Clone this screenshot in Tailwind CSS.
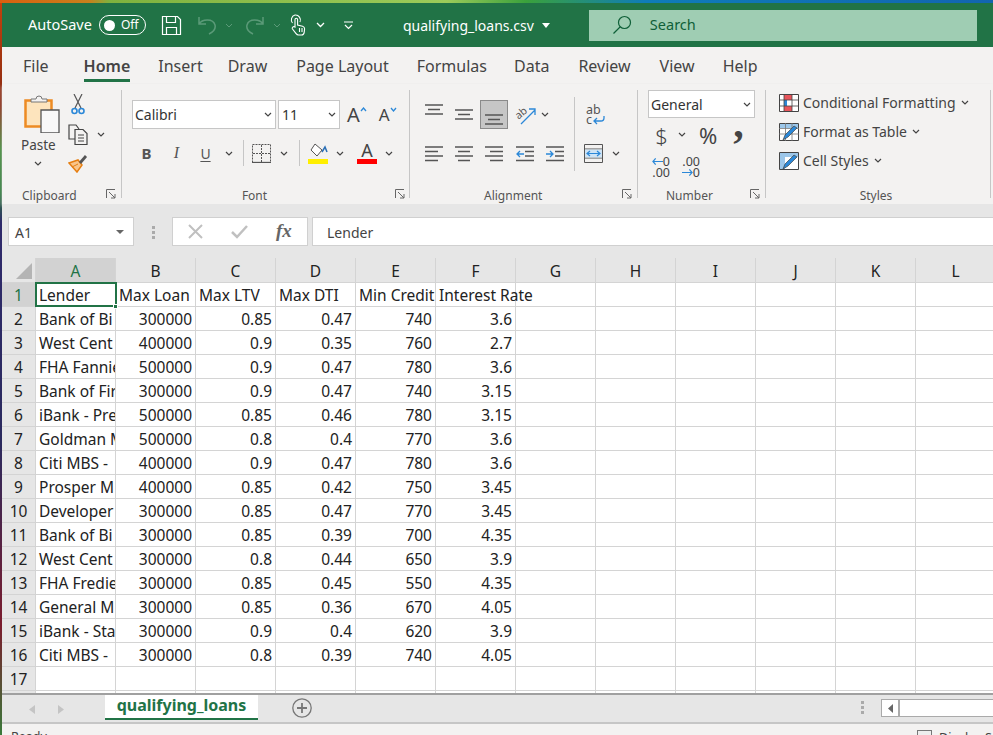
<!DOCTYPE html>
<html lang="en">
<head>
<meta charset="utf-8">
<title>qualifying_loans.csv</title>
<script src="https://cdn.jsdelivr.net/npm/@tailwindcss/browser@4"></script>
</head>
<body class="m-0 overflow-hidden bg-white">
<div class="flex h-[735px] w-[993px] flex-col overflow-hidden font-['Noto_Sans',sans-serif] text-[#444]">
  <div class="h-[3px] shrink-0 bg-[linear-gradient(90deg,#d9600f_0,#c9801c_9%,#7fb23e_11%,#9ccb5a_45%,#3aa13c_53%,#0f7cb8_65%,#1265b0_100%)]"></div>
  <div class="flex min-h-0 flex-1">
    <div class="w-[2px] shrink-0 bg-[linear-gradient(180deg,#c2410c_0,#8a2a12_14%,#3f8a36_20%,#2c7a3a_26%,#2f2a6b_30%,#2b2a5e_60%,#7b1d2e_85%,#3a7a3a_100%)]"></div>
    <div class="flex min-w-0 flex-1 flex-col">

      <!-- Title bar -->
      <div class="flex h-[44px] shrink-0 items-center bg-[#217346] text-white">
        <span class="ml-[26px] text-[14.5px]">AutoSave</span>
        <div class="ml-[7px] flex h-[20px] w-[47px] items-center rounded-full border border-white pl-[4px]">
          <span class="h-[11px] w-[11px] rounded-full bg-white"></span>
          <span class="ml-[6px] text-[12px]">Off</span>
        </div>
        <svg class="ml-[15px]" width="21" height="21" viewBox="0 0 21 21" fill="none" stroke="#fff" stroke-width="1.2"><path d="M1.500 1.500h15l3 3v15h-18z"/><path d="M5.500 1.500v6h9v-6M5.500 19.500v-7h10v7"/></svg>
        <svg class="ml-[15px]" width="20" height="20" viewBox="0 0 20 20" fill="none" stroke="#5b9a78" stroke-width="1.5"><path d="M2 2v7h7M2 9c3-5 14-6 16 1 1 4-2 7-6 9"/></svg>
        <svg class="ml-[8px]" width="8" height="5" viewBox="0 0 8 5" fill="none" stroke="#5b9a78"><path d="M1 1l3 3 3-3"/></svg>
        <svg class="ml-[12px]" width="20" height="20" viewBox="0 0 20 20" fill="none" stroke="#5b9a78" stroke-width="1.5"><path d="M18 2v7h-7M18 9C15 4 4 3 2 10c-1 4 2 7 6 9"/></svg>
        <svg class="ml-[8px]" width="8" height="5" viewBox="0 0 8 5" fill="none" stroke="#5b9a78"><path d="M1 1l3 3 3-3"/></svg>
        <svg class="ml-[9px]" width="16" height="22" viewBox="0 0 16 22" fill="none" stroke="#fff" stroke-width="1.1"><path d="M2.500 9A5 5 0 0 1 5 1a5 5 0 0 1 5 7"/><path d="M5 13V5.500a1.300 1.300 0 0 1 2.600 0V11l5 1.200c1.600.5 2 1.300 2 2.600l-.4 3.600c-.2 1.600-1 2.600-2.600 2.600H8.500c-1 0-1.800-.5-2.400-1.300L2.500 15c-1-1.500.8-3 2.500-2z"/><path d="M9.500 14v4M12 14v4"/></svg>
        <svg class="ml-[10px]" width="9" height="6" viewBox="0 0 9 6" fill="none" stroke="#fff" stroke-width="1.3"><path d="M1 1l3.500 3.500L8 1"/></svg>
        <svg class="ml-[18px]" width="11" height="9" viewBox="0 0 11 9" fill="none" stroke="#fff"><path d="M1 1h9M2 4l3.500 3.500L9 4" stroke-width="1.2"/></svg>
        <span class="ml-[49px] text-[14px]">qualifying_loans.csv</span>
        <svg class="ml-[8px]" width="8" height="5" viewBox="0 0 8 5" fill="#fff"><path d="M0 0h8L4 5z"/></svg>
        <div class="ml-[39px] flex h-[31px] w-[388px] items-center bg-[#9fcdb3] text-[#0f5f38]">
          <svg class="ml-[23px]" width="20" height="20" viewBox="0 0 20 20" fill="none" stroke="#0f5f38" stroke-width="1.2"><circle cx="12.500" cy="7.500" r="6"/><path d="M8.300 11.800L1.500 18.500"/></svg>
          <span class="ml-[18px] text-[14.500px]">Search</span>
        </div>
      </div>

      <!-- Ribbon tabs -->
      <div class="flex h-[37px] shrink-0 items-start bg-[#f3f2f1] pt-[8px] text-[16px] leading-[22px]">
        <span class="ml-[21px]">File</span>
        <span class="ml-[35px] border-b-[3px] border-[#217346] pb-[2px] font-semibold">Home</span>
        <span class="ml-[28px]">Insert</span>
        <span class="ml-[25px]">Draw</span>
        <span class="ml-[29px]">Page Layout</span>
        <span class="ml-[28px]">Formulas</span>
        <span class="ml-[27px]">Data</span>
        <span class="ml-[29px]">Review</span>
        <span class="ml-[29px]">View</span>
        <span class="ml-[28px]">Help</span>
      </div>

      <!-- Ribbon -->
      <div class="flex h-[120px] shrink-0 items-start bg-[#f3f2f1] pt-[6px] shadow-[0_2px_3px_#c8c8c8]">

        <!-- Clipboard -->
        <div class="relative flex h-[108px] w-[120px] shrink-0 flex-col border-r border-[#c6c6c6]">
          <div class="flex h-[100px] shrink-0">
            <div class="ml-[19px] flex w-[40px] flex-col items-start pt-[5px]">
              <svg class="ml-[3px]" width="36" height="38" viewBox="0 0 36 38" fill="none"><path d="M1.500 5.500h26v26h-26z" fill="#fde4bd" stroke="#ed8b23" stroke-width="2.500"/><path d="M7 7V4h5a3 3 0 0 1 6 0h5v3z" fill="#f3f2f1" stroke="#777"/><path d="M17 15h18v23H17z" fill="#f8f8f8" stroke="#555" stroke-width="1.300"/></svg>
              <span class="mt-[3px] text-[13.500px] leading-[18px]">Paste</span>
              <svg class="mt-[7px] ml-[13px]" width="8" height="5" viewBox="0 0 8 5" fill="none" stroke="#444" stroke-width="1.200"><path d="M1 1l3 3 3-3"/></svg>
            </div>
            <div class="ml-[7px] flex flex-col pt-[4px]">
              <svg class="ml-[3px]" width="14" height="21" viewBox="0 0 14 21" fill="none"><path d="M3 0l7 14M11 0L4 14" stroke="#555" stroke-width="1.200"/><circle cx="3.500" cy="17" r="2.500" stroke="#2b88d8" stroke-width="1.600"/><circle cx="10.500" cy="17" r="2.500" stroke="#2b88d8" stroke-width="1.600"/></svg>
              <div class="mt-[9px] flex items-center">
                <svg width="20" height="21" viewBox="0 0 20 21" fill="none" stroke="#444" stroke-width="1.200"><path d="M8 15H1V1h7l3 4"/><path d="M7 5.500h8l4 4v11H7z" fill="#f3f2f1"/><path d="M10 11h6M10 14h6M10 17h6" stroke-width="1"/></svg>
                <svg class="ml-[9px]" width="8" height="5" viewBox="0 0 8 5" fill="none" stroke="#444" stroke-width="1.200"><path d="M1 1l3 3 3-3"/></svg>
              </div>
              <svg class="mt-[9px]" width="20" height="19" viewBox="0 0 20 19" fill="none"><path d="M1 9l9-3 4 5-5 7z" fill="#f8c58a" stroke="#e67e10" stroke-width="1.500"/><path d="M12 9l6-7" stroke="#555" stroke-width="2.800"/><path d="M4 13l6-3" stroke="#e67e10"/></svg>
            </div>
          </div>
          <span class="pl-[20px] text-[12px] leading-[12px] text-[#555]">Clipboard</span>
          <svg class="absolute right-[5px] bottom-[-1px]" width="10" height="10" viewBox="0 0 10 10" fill="none" stroke="#666"><path d="M.500 9V.500H9M3 3l6 6M9 5v4H5"/></svg>
        </div>

        <!-- Font -->
        <div class="relative flex h-[108px] w-[288px] shrink-0 flex-col items-stretch border-r border-[#c6c6c6]">
          <div class="flex h-[100px] shrink-0 flex-col pt-[10px]">
            <div class="flex items-center">
              <div class="ml-[10px] flex h-[29px] w-[144px] items-center justify-between border border-[#c6c6c6] bg-white pr-[3px] pl-[2px] text-[14px] text-[#333]">
                <span>Calibri</span>
                <svg width="8" height="5" viewBox="0 0 8 5" fill="none" stroke="#444" stroke-width="1.200"><path d="M1 1l3 3 3-3"/></svg>
              </div>
              <div class="ml-[2px] flex h-[29px] w-[62px] items-center justify-between border border-[#c6c6c6] bg-white pr-[3px] pl-[3px] text-[14px] text-[#333]">
                <span>11</span>
                <svg width="8" height="5" viewBox="0 0 8 5" fill="none" stroke="#444" stroke-width="1.200"><path d="M1 1l3 3 3-3"/></svg>
              </div>
              <span class="ml-[7px] text-[20px] leading-none">A</span>
              <svg class="mb-[10px]" width="7" height="5" viewBox="0 0 7 5" fill="none" stroke="#2b88d8" stroke-width="1.300"><path d="M1 4l2.500-3L6 4"/></svg>
              <span class="ml-[12px] text-[17px] leading-none">A</span>
              <svg class="mb-[10px]" width="7" height="5" viewBox="0 0 7 5" fill="none" stroke="#2b88d8" stroke-width="1.300"><path d="M1 1l2.500 3L6 1"/></svg>
            </div>
            <div class="mt-[11px] flex h-[26px] items-center">
              <span class="ml-[19px] w-[11px] text-center text-[15px] font-bold text-[#555]">B</span>
              <span class="ml-[19px] w-[11px] text-center font-['Liberation_Serif'] text-[16px] text-[#555] italic">I</span>
              <span class="ml-[18px] w-[11px] text-center text-[14px] text-[#555] underline underline-offset-2">U</span>
              <svg class="ml-[14px]" width="8" height="5" viewBox="0 0 8 5" fill="none" stroke="#444" stroke-width="1.200"><path d="M1 1l3 3 3-3"/></svg>
              <span class="ml-[10px] h-[26px] w-px bg-[#c6c6c6]"></span>
              <svg class="ml-[8px]" width="19" height="19" viewBox="0 0 19 19" fill="none" stroke="#555"><path d="M.500.500h18v18H.500z" stroke-dasharray="2 1"/><path d="M9.500 1v17M1 9.500h17" stroke-dasharray="2 1"/><path d="M0 18.500h19" stroke-width="1.300"/></svg>
              <svg class="ml-[9px]" width="8" height="5" viewBox="0 0 8 5" fill="none" stroke="#444" stroke-width="1.200"><path d="M1 1l3 3 3-3"/></svg>
              <span class="ml-[11px] h-[26px] w-px bg-[#c6c6c6]"></span>
              <svg class="ml-[8px]" width="20" height="21" viewBox="0 0 20 21" fill="none"><path d="M7 1l7 6-5 6-6-6z" fill="#fff" stroke="#555"/><path d="M14 9l3-5 2 5" stroke="#2b6fb5" stroke-width="1.500"/><path d="M0 16h20v5H0z" fill="#ffef00" stroke="none"/></svg>
              <svg class="ml-[8px]" width="8" height="5" viewBox="0 0 8 5" fill="none" stroke="#444" stroke-width="1.200"><path d="M1 1l3 3 3-3"/></svg>
              <div class="ml-[13px] flex w-[20px] flex-col items-center">
                <span class="text-[18px] leading-[16px]">A</span>
                <span class="mt-[1px] h-[5px] w-[20px] bg-[#f00]"></span>
              </div>
              <svg class="ml-[8px]" width="8" height="5" viewBox="0 0 8 5" fill="none" stroke="#444" stroke-width="1.200"><path d="M1 1l3 3 3-3"/></svg>
            </div>
          </div>
          <span class="pr-[22px] text-center text-[12px] leading-[12px] text-[#555]">Font</span>
          <svg class="absolute right-[4px] bottom-[-1px]" width="10" height="10" viewBox="0 0 10 10" fill="none" stroke="#666"><path d="M.500 9V.500H9M3 3l6 6M9 5v4H5"/></svg>
        </div>

        <!-- Alignment -->
        <div class="relative flex h-[108px] w-[228px] shrink-0 flex-col border-r border-[#c6c6c6]">
          <div class="flex h-[100px] shrink-0 pt-[10px]">
            <div class="flex flex-col">
              <div class="flex h-[29px] items-center">
                <svg class="mb-[9px] ml-[15px]" width="18" height="12" viewBox="0 0 18 12" stroke="#555" stroke-width="1.300"><path d="M0 1h18M3 5.500h12M0 10h18"/></svg>
                <svg class="ml-[12px]" width="18" height="12" viewBox="0 0 18 12" stroke="#555" stroke-width="1.300"><path d="M0 1h18M3 5.500h12M0 10h18"/></svg>
                <div class="ml-[7px] flex h-[29px] w-[28px] items-end justify-center border border-[#8a8a8a] bg-[#c6c6c6] pb-[2px]">
                  <svg width="18" height="12" viewBox="0 0 18 12" stroke="#555" stroke-width="1.300"><path d="M0 1h18M3 5.500h12M0 10h18"/></svg>
                </div>
                <svg class="ml-[7px] overflow-visible" width="21" height="20" viewBox="0 0 21 20" fill="none"><text x="1" y="12" transform="rotate(-40 6 10)" font-family="Noto Sans" font-size="10.500" fill="#555">ab</text><path d="M6 19L20 5M14 4h6v6" stroke="#2b88d8" stroke-width="1.300"/></svg>
                <svg class="ml-[5px]" width="8" height="5" viewBox="0 0 8 5" fill="none" stroke="#444" stroke-width="1.200"><path d="M1 1l3 3 3-3"/></svg>
              </div>
              <div class="mt-[16px] flex h-[17px] items-center">
                <svg class="ml-[15px]" width="18" height="16" viewBox="0 0 18 16" stroke="#555" stroke-width="1.300"><path d="M0 1h18M0 5.500h13M0 10h18M0 14.500h13"/></svg>
                <svg class="ml-[12px]" width="18" height="16" viewBox="0 0 18 16" stroke="#555" stroke-width="1.300"><path d="M0 1h18M3 5.500h12M0 10h18M3 14.500h12"/></svg>
                <svg class="ml-[12px]" width="18" height="16" viewBox="0 0 18 16" stroke="#555" stroke-width="1.300"><path d="M0 1h18M5 5.500h13M0 10h18M5 14.500h13"/></svg>
                <svg class="ml-[13px]" width="18" height="16" viewBox="0 0 18 16" fill="none" stroke="#555" stroke-width="1.300"><path d="M0 1h18M9 5.500h9M9 10h9M0 14.500h18"/><path d="M8 8H1M4 5L1 8l3 3" stroke="#2b88d8"/></svg>
                <svg class="ml-[12px]" width="18" height="16" viewBox="0 0 18 16" fill="none" stroke="#555" stroke-width="1.300"><path d="M0 1h18M9 5.500h9M9 10h9M0 14.500h18"/><path d="M0 8h7M4 5l3 3-3 3" stroke="#2b88d8"/></svg>
              </div>
            </div>
            <span class="-mt-[3px] ml-[10px] h-[74px] w-px bg-[#c6c6c6]"></span>
            <div class="ml-[9px] flex flex-col">
              <div class="ml-[2px] flex h-[29px] flex-col items-start text-[12.500px] leading-[10px] text-[#555]">
                <span class="mt-[5px]">ab</span>
                <span class="flex items-center">c<svg class="ml-[1px]" width="12" height="9" viewBox="0 0 12 9" fill="none" stroke="#2b88d8" stroke-width="1.300"><path d="M11 0v2a3 3 0 0 1-3 3H1M4 2L1 5l3 3"/></svg></span>
              </div>
              <div class="mt-[14px] flex h-[20px] items-center">
                <svg width="19" height="19" viewBox="0 0 19 19" fill="none"><path d="M.500.500h18v18H.500z" stroke="#555"/><path d="M0 5h19M0 14h19" stroke="#555"/><path d="M1 5.500h17v8H1z" fill="#cfe4f5"/><path d="M3 9.500h13M6 7L3 9.500 6 12M13 7l3 2.500-3 2.500" stroke="#2b88d8" stroke-width="1.200"/></svg>
                <svg class="ml-[9px]" width="8" height="5" viewBox="0 0 8 5" fill="none" stroke="#444" stroke-width="1.200"><path d="M1 1l3 3 3-3"/></svg>
              </div>
            </div>
          </div>
          <span class="pl-[74px] text-[12px] leading-[12px] text-[#555]">Alignment</span>
          <svg class="absolute right-[5px] bottom-[-1px]" width="10" height="10" viewBox="0 0 10 10" fill="none" stroke="#666"><path d="M.500 9V.500H9M3 3l6 6M9 5v4H5"/></svg>
        </div>

        <!-- Number -->
        <div class="relative flex h-[108px] w-[128px] shrink-0 flex-col border-r border-[#c6c6c6]">
          <div class="flex h-[100px] shrink-0 flex-col">
            <div class="ml-[10px] flex h-[28px] w-[107px] items-center justify-between border border-[#c6c6c6] bg-white pr-[3px] pl-[2px] text-[14px] text-[#333]">
              <span>General</span>
              <svg width="8" height="5" viewBox="0 0 8 5" fill="none" stroke="#444" stroke-width="1.200"><path d="M1 1l3 3 3-3"/></svg>
            </div>
            <div class="mt-[3px] flex h-[27px] items-center">
              <span class="ml-[17px] w-[13px] text-center text-[22px] leading-none font-light">$</span>
              <svg class="ml-[10px]" width="8" height="5" viewBox="0 0 8 5" fill="none" stroke="#444" stroke-width="1.200"><path d="M1 1l3 3 3-3"/></svg>
              <span class="ml-[13px] text-[22px] leading-none">%</span>
              <span class="mb-[23px] ml-[16px] font-['Liberation_Serif'] text-[42px] leading-[20px] font-bold">,</span>
            </div>
            <div class="mt-[8px] flex items-center">
              <div class="ml-[12px] flex h-[22px] w-[20px] flex-col items-end text-[12.500px] leading-[11px]">
                <span class="flex items-center"><svg width="11" height="9" viewBox="0 0 12 9" fill="none" stroke="#2b88d8" stroke-width="1.300"><path d="M12 4.500H1M4 1L1 4.500 4 8"/></svg>0</span>
                <span>.00</span>
              </div>
              <div class="ml-[10px] flex h-[22px] w-[20px] flex-col items-end text-[12.500px] leading-[11px]">
                <span>.00</span>
                <span class="flex items-center"><svg width="11" height="9" viewBox="0 0 12 9" fill="none" stroke="#2b88d8" stroke-width="1.300"><path d="M0 4.500h11M8 1l3 3.500L8 8"/></svg>0</span>
              </div>
            </div>
          </div>
          <span class="pl-[28px] text-[12px] leading-[12px] text-[#555]">Number</span>
          <svg class="absolute right-[5px] bottom-[-1px]" width="10" height="10" viewBox="0 0 10 10" fill="none" stroke="#666"><path d="M.500 9V.500H9M3 3l6 6M9 5v4H5"/></svg>
        </div>

        <!-- Styles -->
        <div class="flex h-[108px] w-[225px] shrink-0 flex-col border-r border-[#c6c6c6]">
          <div class="flex h-[100px] shrink-0 flex-col pl-[13px] text-[14px] leading-[19px]">
            <div class="-mt-[2px] flex h-[29px] items-center">
              <svg width="20" height="18" viewBox="0 0 20 18" fill="none"><path d="M.500.500h19v17H.500z" fill="#fff" stroke="#444"/><path d="M5 1h8v5H5zM5 12h8v5H5z" fill="#e8555b"/><path d="M5 6h3v6H5z" fill="#2b88d8"/><path d="M0 6h20M0 12h20M5 0v18M13 0v18" stroke="#444" stroke-width=".8"/></svg>
              <span class="ml-[4px]">Conditional Formatting</span>
              <svg class="ml-[5px]" width="8" height="5" viewBox="0 0 8 5" fill="none" stroke="#444" stroke-width="1.200"><path d="M1 1l3 3 3-3"/></svg>
            </div>
            <div class="flex h-[29px] items-center">
              <svg width="20" height="18" viewBox="0 0 20 18" fill="none"><path d="M.500.500h19v17H.500z" fill="#fff" stroke="#444"/><path d="M1 1h18v4H1z" fill="#9cc7ea"/><path d="M0 5.500h20M0 11h20M6.500 0v18M13 0v18" stroke="#777" stroke-width=".8"/><path d="M4 17l2-5 9-9 3 2-9 9z" fill="#2b88d8" stroke="#444" stroke-width=".7"/></svg>
              <span class="ml-[4px]">Format as Table</span>
              <svg class="ml-[5px]" width="8" height="5" viewBox="0 0 8 5" fill="none" stroke="#444" stroke-width="1.200"><path d="M1 1l3 3 3-3"/></svg>
            </div>
            <div class="flex h-[29px] items-center">
              <svg width="20" height="18" viewBox="0 0 20 18" fill="none"><path d="M.500.500h19v17H.500z" fill="#fff" stroke="#444"/><path d="M1 1h18v4H1zM1 5h5v12H1z" fill="#9cc7ea"/><path d="M4 17l2-5 9-9 3 2-9 9z" fill="#2b88d8" stroke="#444" stroke-width=".7"/></svg>
              <span class="ml-[4px]">Cell Styles</span>
              <svg class="ml-[5px]" width="8" height="5" viewBox="0 0 8 5" fill="none" stroke="#444" stroke-width="1.200"><path d="M1 1l3 3 3-3"/></svg>
            </div>
          </div>
          <span class="pr-[4px] text-center text-[12px] leading-[12px] text-[#555]">Styles</span>
        </div>
      </div>

      <!-- Formula bar -->
      <div class="flex h-[54px] shrink-0 items-start bg-[#e6e6e6] pt-[13px] text-[14px] text-[#444]">
        <div class="ml-[6px] flex h-[29px] w-[126px] items-center justify-between border border-[#d0d0d0] bg-white pt-[1px] pr-[9px] pl-[6px]">
          <span>A1</span>
          <svg width="8" height="4" viewBox="0 0 8 4" fill="#666"><path d="M0 0h8L4 4z"/></svg>
        </div>
        <div class="mt-[9px] mr-[17px] ml-[18px] flex flex-col gap-[2px]">
          <span class="h-[3px] w-[3px] bg-[#aaa]"></span>
          <span class="h-[3px] w-[3px] bg-[#aaa]"></span>
          <span class="h-[3px] w-[3px] bg-[#aaa]"></span>
        </div>
        <div class="flex h-[29px] w-[136px] items-center border border-[#d0d0d0] bg-white">
          <svg class="ml-[15px]" width="15" height="15" viewBox="0 0 15 15" stroke="#c0c0c0" stroke-width="2"><path d="M1 1l13 13M14 1L1 14"/></svg>
          <svg class="ml-[28px]" width="17" height="14" viewBox="0 0 17 14" fill="none" stroke="#c0c0c0" stroke-width="2.500"><path d="M1 7l5 5L16 1"/></svg>
          <span class="ml-[28px] font-['Liberation_Serif'] text-[19px] font-bold text-[#666] italic">fx</span>
        </div>
        <div class="ml-[4px] flex h-[29px] min-w-0 flex-1 items-center border border-r-0 border-[#d0d0d0] bg-white pt-[1px] pl-[14px]">Lender</div>
      </div>

      <!-- Sheet -->
      <div class="relative h-[435px] shrink-0 overflow-hidden bg-white text-[15.500px] leading-[24px] text-[#222]">
        <div class="grid grid-cols-[34px_repeat(12,80px)] grid-rows-[25px_repeat(18,24px)] [&>div]:overflow-hidden [&>div]:border-r [&>div]:border-b [&>div]:border-[#d4d4d4] [&>div]:px-[3px] [&>div]:whitespace-nowrap">
          <div class="flex items-end justify-end border-[#b8b8b8] bg-[#e6e6e6] pb-[3px]"><svg width="16" height="16" viewBox="0 0 16 16" fill="#b4b4b4"><path d="M16 0v16H0z"/></svg></div>
          <div class="bg-[#d2d2d2] text-center leading-[26px] text-[#217346]">A</div>
          <div class="bg-[#e6e6e6] text-center leading-[26px]">B</div>
          <div class="bg-[#e6e6e6] text-center leading-[26px]">C</div>
          <div class="bg-[#e6e6e6] text-center leading-[26px]">D</div>
          <div class="bg-[#e6e6e6] text-center leading-[26px]">E</div>
          <div class="bg-[#e6e6e6] text-center leading-[26px]">F</div>
          <div class="bg-[#e6e6e6] text-center leading-[26px]">G</div>
          <div class="bg-[#e6e6e6] text-center leading-[26px]">H</div>
          <div class="bg-[#e6e6e6] text-center leading-[26px]">I</div>
          <div class="bg-[#e6e6e6] text-center leading-[26px]">J</div>
          <div class="bg-[#e6e6e6] text-center leading-[26px]">K</div>
          <div class="bg-[#e6e6e6] text-center leading-[26px]">L</div>

          <div class="bg-[#d2d2d2] text-center text-[#217346]">1</div><div>Lender</div><div>Max Loan</div><div>Max LTV</div><div>Max DTI</div><div>Min Credit</div><div class="overflow-visible!">Interest Rate</div><div></div><div></div><div></div><div></div><div></div><div></div>
          <div class="bg-[#e6e6e6] text-center">2</div><div>Bank of Bi</div><div class="text-right">300000</div><div class="text-right">0.85</div><div class="text-right">0.47</div><div class="text-right">740</div><div class="text-right">3.6</div><div></div><div></div><div></div><div></div><div></div><div></div>
          <div class="bg-[#e6e6e6] text-center">3</div><div>West Cent</div><div class="text-right">400000</div><div class="text-right">0.9</div><div class="text-right">0.35</div><div class="text-right">760</div><div class="text-right">2.7</div><div></div><div></div><div></div><div></div><div></div><div></div>
          <div class="bg-[#e6e6e6] text-center">4</div><div>FHA Fannie</div><div class="text-right">500000</div><div class="text-right">0.9</div><div class="text-right">0.47</div><div class="text-right">780</div><div class="text-right">3.6</div><div></div><div></div><div></div><div></div><div></div><div></div>
          <div class="bg-[#e6e6e6] text-center">5</div><div>Bank of Fir</div><div class="text-right">300000</div><div class="text-right">0.9</div><div class="text-right">0.47</div><div class="text-right">740</div><div class="text-right">3.15</div><div></div><div></div><div></div><div></div><div></div><div></div>
          <div class="bg-[#e6e6e6] text-center">6</div><div>iBank - Pre</div><div class="text-right">500000</div><div class="text-right">0.85</div><div class="text-right">0.46</div><div class="text-right">780</div><div class="text-right">3.15</div><div></div><div></div><div></div><div></div><div></div><div></div>
          <div class="bg-[#e6e6e6] text-center">7</div><div>Goldman M</div><div class="text-right">500000</div><div class="text-right">0.8</div><div class="text-right">0.4</div><div class="text-right">770</div><div class="text-right">3.6</div><div></div><div></div><div></div><div></div><div></div><div></div>
          <div class="bg-[#e6e6e6] text-center">8</div><div>Citi MBS -</div><div class="text-right">400000</div><div class="text-right">0.9</div><div class="text-right">0.47</div><div class="text-right">780</div><div class="text-right">3.6</div><div></div><div></div><div></div><div></div><div></div><div></div>
          <div class="bg-[#e6e6e6] text-center">9</div><div>Prosper M</div><div class="text-right">400000</div><div class="text-right">0.85</div><div class="text-right">0.42</div><div class="text-right">750</div><div class="text-right">3.45</div><div></div><div></div><div></div><div></div><div></div><div></div>
          <div class="bg-[#e6e6e6] text-center">10</div><div>Developer</div><div class="text-right">300000</div><div class="text-right">0.85</div><div class="text-right">0.47</div><div class="text-right">770</div><div class="text-right">3.45</div><div></div><div></div><div></div><div></div><div></div><div></div>
          <div class="bg-[#e6e6e6] text-center">11</div><div>Bank of Bi</div><div class="text-right">300000</div><div class="text-right">0.85</div><div class="text-right">0.39</div><div class="text-right">700</div><div class="text-right">4.35</div><div></div><div></div><div></div><div></div><div></div><div></div>
          <div class="bg-[#e6e6e6] text-center">12</div><div>West Cent</div><div class="text-right">300000</div><div class="text-right">0.8</div><div class="text-right">0.44</div><div class="text-right">650</div><div class="text-right">3.9</div><div></div><div></div><div></div><div></div><div></div><div></div>
          <div class="bg-[#e6e6e6] text-center">13</div><div>FHA Fredie</div><div class="text-right">300000</div><div class="text-right">0.85</div><div class="text-right">0.45</div><div class="text-right">550</div><div class="text-right">4.35</div><div></div><div></div><div></div><div></div><div></div><div></div>
          <div class="bg-[#e6e6e6] text-center">14</div><div>General M</div><div class="text-right">300000</div><div class="text-right">0.85</div><div class="text-right">0.36</div><div class="text-right">670</div><div class="text-right">4.05</div><div></div><div></div><div></div><div></div><div></div><div></div>
          <div class="bg-[#e6e6e6] text-center">15</div><div>iBank - Sta</div><div class="text-right">300000</div><div class="text-right">0.9</div><div class="text-right">0.4</div><div class="text-right">620</div><div class="text-right">3.9</div><div></div><div></div><div></div><div></div><div></div><div></div>
          <div class="bg-[#e6e6e6] text-center">16</div><div>Citi MBS -</div><div class="text-right">300000</div><div class="text-right">0.8</div><div class="text-right">0.39</div><div class="text-right">740</div><div class="text-right">4.05</div><div></div><div></div><div></div><div></div><div></div><div></div>
          <div class="bg-[#e6e6e6] text-center">17</div><div></div><div></div><div></div><div></div><div></div><div></div><div></div><div></div><div></div><div></div><div></div><div></div>
          <div class="bg-[#e6e6e6]"></div><div></div><div></div><div></div><div></div><div></div><div></div><div></div><div></div><div></div><div></div><div></div><div></div>
        </div>
        <!-- Selected cell -->
        <div class="absolute top-[24px] left-[33px] h-[25px] w-[82px] border-2 border-[#217346]"></div>
        <div class="absolute top-[46px] left-[111px] h-[5px] w-[5px] border border-white bg-[#217346]"></div>
      </div>

      <!-- Sheet tabs -->
      <div class="flex h-[31px] shrink-0 items-start border-t-2 border-b-2 border-t-[#a0a0a0] border-b-[#c6c6c6] bg-[#e6e6e6]">
        <svg class="mt-[10px] ml-[27px]" width="6" height="9" viewBox="0 0 6 9" fill="#c4c4c4"><path d="M6 0v9L0 4.500z"/></svg>
        <svg class="mt-[10px] ml-[23px]" width="6" height="9" viewBox="0 0 6 9" fill="#c4c4c4"><path d="M0 0v9l6-4.500z"/></svg>
        <div class="ml-[41px] flex h-[25px] w-[153px] items-center justify-center border-b-2 border-[#217346] bg-white pb-[3px] text-[16px] font-bold text-[#217346]">qualifying_loans</div>
        <svg class="mt-[3px] ml-[34px]" width="20" height="20" viewBox="0 0 20 20" fill="none" stroke="#777" stroke-width="1.300"><circle cx="10" cy="10" r="9.200"/><path d="M5 10h10M10 5v10" stroke-width="1.800"/></svg>
        <div class="mt-[6px] ml-[549px] flex flex-col gap-[2px]">
          <span class="h-[3px] w-[3px] bg-[#aaa]"></span>
          <span class="h-[3px] w-[3px] bg-[#aaa]"></span>
          <span class="h-[3px] w-[3px] bg-[#aaa]"></span>
        </div>
        <div class="mt-[4px] ml-[17px] flex h-[18px] flex-1 border-y border-l border-[#aaa] bg-white">
          <div class="flex w-[18px] items-center justify-center border-r-2 border-[#aaa]">
            <svg width="5" height="9" viewBox="0 0 5 9" fill="#666"><path d="M5 0v9L0 4.500z"/></svg>
          </div>
        </div>
      </div>

      <!-- Status bar -->
      <div class="flex min-h-0 flex-1 items-start justify-between overflow-hidden bg-[#f3f2f1] text-[12.500px] leading-[16px]">
        <span class="mt-[5px] ml-[9px]">Ready</span>
        <div class="mt-[6px] flex items-start">
          <span class="h-[12px] w-[15px] border border-[#777] bg-[#eee]"></span>
          <span class="ml-[7px] w-[54px] overflow-hidden whitespace-nowrap">Display S</span>
        </div>
      </div>
    </div>
  </div>
</div>
</body>
</html>
